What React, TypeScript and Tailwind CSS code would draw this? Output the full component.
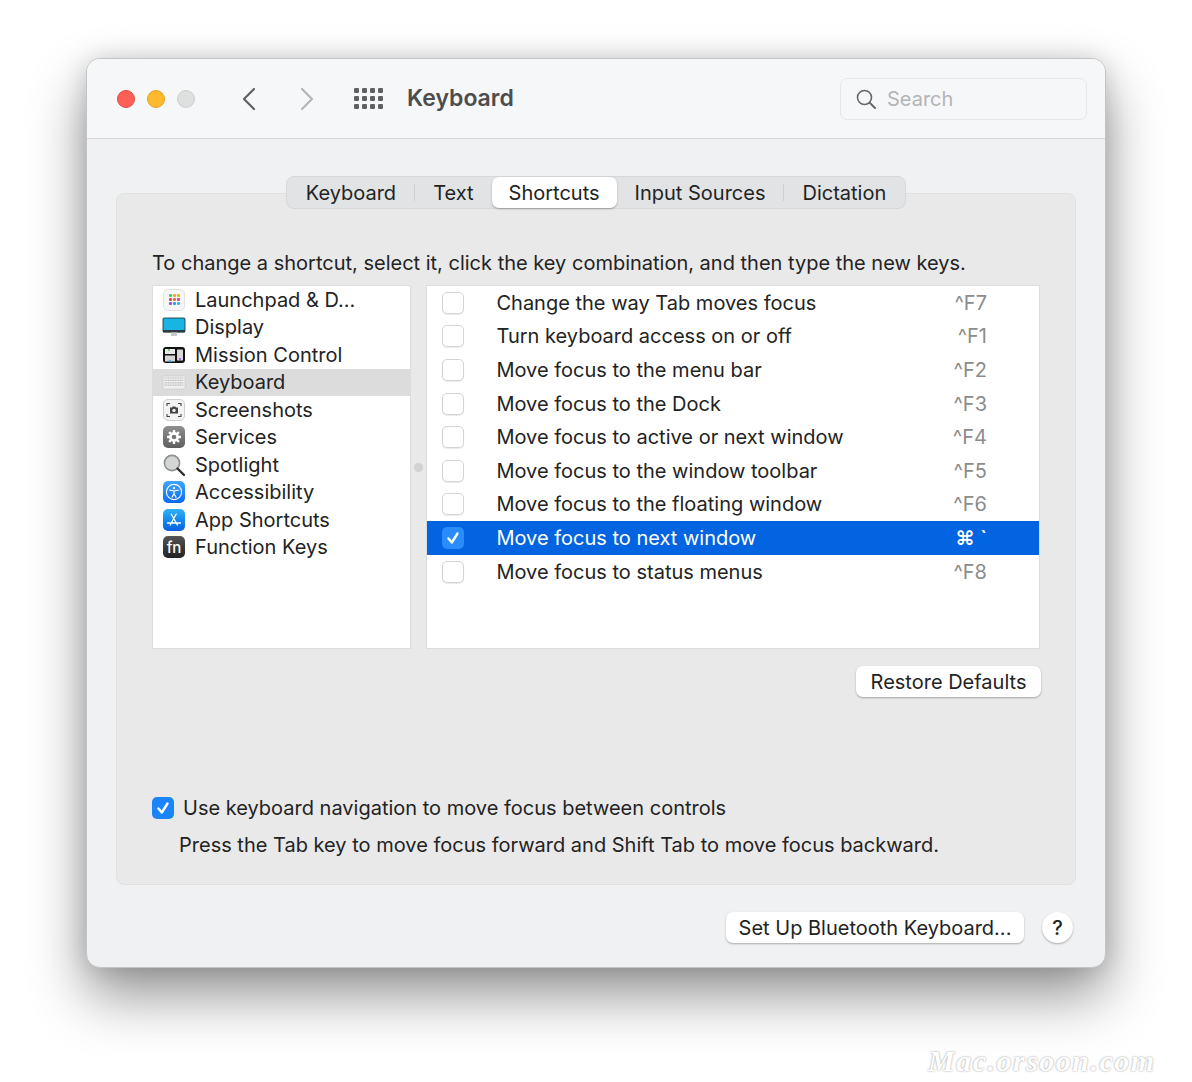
import type { ReactNode } from "react";

const font = { fontFamily: "Inter, 'Liberation Sans', sans-serif" };

const shortcuts = [
  { label: "Change the way Tab moves focus", keys: "^F7" },
  { label: "Turn keyboard access on or off", keys: "^F1" },
  { label: "Move focus to the menu bar", keys: "^F2" },
  { label: "Move focus to the Dock", keys: "^F3" },
  { label: "Move focus to active or next window", keys: "^F4" },
  { label: "Move focus to the window toolbar", keys: "^F5" },
  { label: "Move focus to the floating window", keys: "^F6" },
  { label: "Move focus to next window", keys: "⌘ `", active: true },
  { label: "Move focus to status menus", keys: "^F8" },
];

function Tile({ className, children }: { className: string; children: ReactNode }) {
  return (
    <div className={`w-[22px] h-[22px] rounded-[5px] flex items-center justify-center ${className}`}>
      {children}
    </div>
  );
}

function LaunchpadIcon() {
  const colors = ["#3ecf5c", "#f5a623", "#f7b500", "#e8413c", "#ef6a3a", "#e0409a", "#9b51e0", "#2f9cf0", "#30c0d0"];
  return (
    <Tile className="bg-[#f6f6f6] border border-[#e2e2e2]">
      <div className="grid grid-cols-3 gap-[1px]">
        {colors.map((c) => (
          <span key={c} className="w-[3px] h-[3px] rounded-[1px]" style={{ backgroundColor: c }} />
        ))}
      </div>
    </Tile>
  );
}

function DisplayIcon() {
  return (
    <svg width="24" height="22" viewBox="0 0 24 22">
      <rect x="1" y="2" width="22" height="14" rx="1" fill="#18b4e4" stroke="#1c2a33" strokeWidth="0.8" />
      <rect x="1" y="14" width="22" height="2.4" fill="#2c3a42" />
      <rect x="9" y="16.5" width="6" height="3.5" fill="#c9c9c9" />
    </svg>
  );
}

function MissionIcon() {
  return (
    <svg width="24" height="22" viewBox="0 0 24 22">
      <rect x="1" y="3" width="22" height="16" rx="3" fill="#111" />
      <rect x="3" y="5" width="10" height="5" fill="#e8e8e8" />
      <rect x="3" y="11.5" width="10" height="6" fill="#d6d6d6" />
      <rect x="15" y="5.5" width="6" height="11" rx="0.6" fill="#d9d9d9" />
      <circle cx="7" cy="6" r="1" fill="#3ecf5c" />
      <circle cx="8" cy="17" r="1.2" fill="#2fb4f0" />
      <circle cx="18" cy="15" r="1.1" fill="#9b51e0" />
    </svg>
  );
}

function KeyboardIcon() {
  return (
    <svg width="24" height="22" viewBox="0 0 24 22">
      <rect x="1" y="5" width="22" height="13" rx="1.5" fill="#efefef" stroke="#c8c8c8" strokeWidth="0.6" />
      {[7, 9.4, 11.8, 14.2].map((y) => (
        <line key={y} x1="2.5" x2="21.5" y1={y} y2={y} stroke="#bdbdbd" strokeWidth="1.2" strokeDasharray="1.2 0.5" />
      ))}
    </svg>
  );
}

function ScreenshotIcon() {
  return (
    <Tile className="bg-[#f3f3f3] border border-[#cfcfcf]">
      <svg width="16" height="16" viewBox="0 0 16 16" fill="none">
        <path d="M1 4V1.5h3M12 1.5h3V4M15 12v2.5h-3M4 14.5H1V12" stroke="#444" strokeWidth="1.1" />
        <path d="M4 5.5h2l.7-1h2.6l.7 1h2v6H4z" fill="#444" />
        <circle cx="8" cy="8.4" r="1.7" fill="#eee" />
      </svg>
    </Tile>
  );
}

function ServicesIcon() {
  return (
    <Tile className="bg-gradient-to-b from-[#8f8f8f] to-[#5f5f5f]">
      <svg width="16" height="16" viewBox="0 0 16 16">
        <circle cx="8" cy="8" r="3.6" fill="none" stroke="#fff" strokeWidth="2.6" />
        {[0, 45, 90, 135].map((a) => (
          <rect key={a} x="6.8" y="1" width="2.4" height="14" rx="0.5" fill="#fff" transform={`rotate(${a} 8 8)`} opacity="1" />
        ))}
        <circle cx="8" cy="8" r="2.3" fill="#777" />
      </svg>
    </Tile>
  );
}

function SpotlightIcon() {
  return (
    <svg width="24" height="24" viewBox="0 0 24 24">
      <circle cx="10" cy="10" r="7.6" fill="#d4d6d6" stroke="#8f9090" strokeWidth="1.6" />
      <path d="M15.5 15.5L22 22" stroke="#2f2f2f" strokeWidth="2.4" strokeLinecap="round" />
    </svg>
  );
}

function AccessibilityIcon() {
  return (
    <Tile className="bg-gradient-to-b from-[#3ea6fb] to-[#0a69f0]">
      <svg width="18" height="18" viewBox="0 0 18 18" fill="none" stroke="#fff">
        <circle cx="9" cy="9" r="7.6" strokeWidth="1.1" />
        <circle cx="9" cy="5.1" r="1.2" fill="#fff" stroke="none" />
        <path d="M4.8 7.2L9 8l4.2-.8M9 8v2.6M9 10.6l-2 3.6M9 10.6l2 3.6" strokeWidth="1.2" strokeLinecap="round" />
      </svg>
    </Tile>
  );
}

function AppShortcutsIcon() {
  return (
    <Tile className="bg-gradient-to-b from-[#2fb2f8] to-[#0a5ee0]">
      <svg width="18" height="18" viewBox="0 0 18 18" fill="none" stroke="#fff" strokeWidth="1.3" strokeLinecap="round">
        <path d="M6.2 3l6.2 11M11.2 3L5.2 14M2.5 12h13" />
      </svg>
    </Tile>
  );
}

function FnIcon() {
  return (
    <Tile className="bg-gradient-to-b from-[#555] to-[#222]">
      <span className="text-white text-[15px] leading-none font-medium">fn</span>
    </Tile>
  );
}

const panes: { label: string; icon: ReactNode; active?: boolean }[] = [
  { label: "Launchpad & D...", icon: <LaunchpadIcon /> },
  { label: "Display", icon: <DisplayIcon /> },
  { label: "Mission Control", icon: <MissionIcon /> },
  { label: "Keyboard", icon: <KeyboardIcon />, active: true },
  { label: "Screenshots", icon: <ScreenshotIcon /> },
  { label: "Services", icon: <ServicesIcon /> },
  { label: "Spotlight", icon: <SpotlightIcon /> },
  { label: "Accessibility", icon: <AccessibilityIcon /> },
  { label: "App Shortcuts", icon: <AppShortcutsIcon /> },
  { label: "Function Keys", icon: <FnIcon /> },
];

function Check({ size = 14 }: { size?: number }) {
  return (
    <svg width={size} height={size} viewBox="0 0 14 14" fill="none">
      <path d="M2.5 7.5L5.8 11.5L11.5 2.5" stroke="#fff" strokeWidth="2.4" strokeLinecap="round" strokeLinejoin="round" />
    </svg>
  );
}

function Tab({ label, active, divider }: { label: string; active?: boolean; divider?: boolean }) {
  return (
    <div className="flex items-center">
      <div
        className={
          active
            ? "h-[31px] px-[17px] flex items-center bg-white rounded-[7px] shadow-[0_1px_2px_rgba(0,0,0,0.3)]"
            : "h-[31px] px-[18px] flex items-center"
        }
      >
        {label}
      </div>
      {divider && <div className="w-px h-[17px] bg-[#cfcfd1]" />}
    </div>
  );
}

function PushButton({ className, children }: { className: string; children: ReactNode }) {
  return (
    <div className={`h-[31px] bg-white rounded-[7px] shadow-[0_1px_2px_rgba(0,0,0,0.3)] flex items-center justify-center ${className}`}>
      {children}
    </div>
  );
}

export default function App() {
  return (
    <div className="relative w-[1192px] h-[1082px] bg-white pt-[58px] pl-[86px] overflow-hidden text-[20px] text-[#232323]" style={font}>
      <div className="w-[1020px] h-[910px] rounded-[14px] bg-[#f0f1f3] flex flex-col overflow-hidden border border-[#c4c4c4] shadow-[0_28px_56px_rgba(0,0,0,0.42),0_0_24px_rgba(0,0,0,0.14)]">
        {/* toolbar */}
        <div className="h-[80px] shrink-0 bg-[#f6f7f9] border-b border-[#d6d6d8] flex items-center pl-[30px] pr-[18px]">
          <div className="flex gap-[12px]">
            <span className="w-[18px] h-[18px] rounded-full bg-[#fe5f57] border border-[#e5493f]" />
            <span className="w-[18px] h-[18px] rounded-full bg-[#feb92c] border border-[#e5a222]" />
            <span className="w-[18px] h-[18px] rounded-full bg-[#dedfdf] border border-[#cdcdcd]" />
          </div>
          <svg className="ml-[46px]" width="16" height="24" viewBox="0 0 16 24" fill="none">
            <path d="M13 2L3 12L13 22" stroke="#606060" strokeWidth="2.2" strokeLinecap="round" strokeLinejoin="round" />
          </svg>
          <svg className="ml-[42px]" width="16" height="24" viewBox="0 0 16 24" fill="none">
            <path d="M3 2L13 12L3 22" stroke="#b5b5b5" strokeWidth="2.2" strokeLinecap="round" strokeLinejoin="round" />
          </svg>
          <div className="ml-[39px] grid grid-cols-4 gap-x-[3px] gap-y-[3px]">
            {Array.from({ length: 12 }).map((_, i) => (
              <span key={i} className="w-[5px] h-[5px] rounded-[1px] bg-[#616161]" />
            ))}
          </div>
          <div className="ml-[24px] text-[23px] font-semibold text-[#4d4d4d]">Keyboard</div>
          <div className="ml-auto w-[247px] h-[42px] rounded-[7px] border border-[#e6e6e8] flex items-center pl-[15px] gap-[11px] text-[#b4b4b4]">
            <svg width="20" height="20" viewBox="0 0 20 20" fill="none" stroke="#666" strokeWidth="1.6" strokeLinecap="round">
              <circle cx="8.5" cy="8.5" r="7" />
              <path d="M13.6 13.6L19 19" strokeWidth="2" />
            </svg>
            <span>Search</span>
          </div>
        </div>

        {/* body */}
        <div className="flex-1 px-[29px] pt-[37px] flex flex-col">
          <div className="relative z-10 flex justify-center -mb-[16px]">
            <div className="h-[33px] flex items-center px-px rounded-[8px] bg-[#e2e3e5] border border-[#d6d7d9]">
              <Tab label="Keyboard" divider />
              <Tab label="Text" />
              <Tab label="Shortcuts" active />
              <Tab label="Input Sources" divider />
              <Tab label="Dictation" />
            </div>
          </div>

          <div className="h-[692px] rounded-[8px] bg-[#e9e9e9] border border-[#e0e0e0] px-[35px] pt-[56px] flex flex-col">
            <div className="h-[26px] leading-[26px] whitespace-nowrap">
              To change a shortcut, select it, click the key combination, and then type the new keys.
            </div>
            <div className="mt-[9px] h-[364px] flex items-stretch">
              <div className="w-[260px] bg-white border border-[#dcdcdc]">
                {panes.map((p) => (
                  <div key={p.label} className={`h-[27.5px] flex items-center pl-[9px] ${p.active ? "bg-[#dcdcdc]" : ""}`}>
                    <div className="w-[24px] h-[22px] flex items-center justify-center shrink-0">{p.icon}</div>
                    <span className="ml-[9px]">{p.label}</span>
                  </div>
                ))}
              </div>
              <div className="w-[16px] flex items-center justify-center">
                <span className="w-[9px] h-[9px] rounded-full bg-[#d2d2d2]" />
              </div>
              <div className="w-[617px] bg-white border border-[#dcdcdc]">
                {shortcuts.map((s) => (
                  <div
                    key={s.label}
                    className={`h-[33.6px] flex items-center pl-[15px] pr-[52px] ${s.active ? "bg-[#0364e1] text-white" : ""}`}
                  >
                    {s.active ? (
                      <span className="w-[22px] h-[22px] rounded-[5px] bg-[#2a8bfb] flex items-center justify-center">
                        <Check />
                      </span>
                    ) : (
                      <span className="w-[22px] h-[22px] rounded-[5px] bg-white border border-[#d4d4d4] shadow-[0_1px_1px_rgba(0,0,0,0.08)]" />
                    )}
                    <span className="ml-[32px]">{s.label}</span>
                    <span className={`ml-auto ${s.active ? "text-white font-semibold" : "text-[#8c8c8c]"}`}>{s.keys}</span>
                  </div>
                ))}
              </div>
            </div>
            <div className="mt-[17px] flex justify-end pr-[-1px]">
              <PushButton className="w-[185px] -mr-[1px]">Restore Defaults</PushButton>
            </div>
            <div className="mt-[99px] flex items-center h-[24px]">
              <span className="w-[22px] h-[22px] rounded-[5px] bg-[#1a84fa] flex items-center justify-center">
                <Check />
              </span>
              <span className="ml-[9px] whitespace-nowrap">Use keyboard navigation to move focus between controls</span>
            </div>
            <div className="mt-[12px] ml-[27px] h-[26px] leading-[26px] whitespace-nowrap">
              Press the Tab key to move focus forward and Shift Tab to move focus backward.
            </div>
          </div>

          <div className="mt-[27px] flex items-center justify-end gap-[18px] pr-[3px]">
            <PushButton className="w-[298px]">Set Up Bluetooth Keyboard...</PushButton>
            <div className="w-[31px] h-[31px] rounded-full bg-white shadow-[0_1px_2px_rgba(0,0,0,0.3)] flex items-center justify-center font-medium">?</div>
          </div>
        </div>
      </div>

      <div
        className="absolute left-[928px] top-[1043px] text-[30px] leading-[36px] italic font-bold text-white tracking-[1.5px] [text-shadow:0_0_2px_rgba(0,0,0,0.45)]"
        style={{ fontFamily: "'Liberation Serif', serif" }}
      >
        Mac.orsoon.com
      </div>
    </div>
  );
}
